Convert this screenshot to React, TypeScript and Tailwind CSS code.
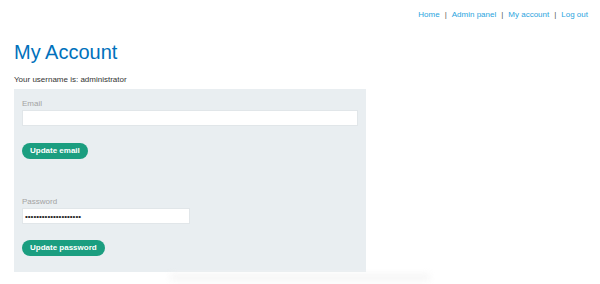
import React from "react";

const links = ["Home", "Admin panel", "My account", "Log out"];

export default function App() {
  return (
    <div className="min-h-screen bg-white font-['Liberation_Sans',Arial,sans-serif] text-[#333]">
      {/* Top nav */}
      <nav className="flex justify-end pt-[11px] pr-[12px] text-[8px] leading-[8px]">
        {links.map((l, i) => (
          <span key={l} className="flex">
            {i > 0 && <span className="mx-[5px] text-[#555]">|</span>}
            <a className="text-[#2aa4de]">{l}</a>
          </span>
        ))}
      </nav>

      <div className="pl-[14px]">
        <h1 className="mt-[23px] text-[20px] leading-[20px] text-[#0071bc]">My Account</h1>
        <p className="mt-[14px] text-[8px] leading-[8px] text-[#333]">Your username is: administrator</p>

        {/* Form panel */}
        <div className="mt-[5px] w-[352px] bg-[#e9eef1] px-[8px] pt-[11px] pb-[16px]">
          <label className="block text-[8px] leading-[8px] text-[#a3a3a3]">Email</label>
          <input
            type="text"
            className="mt-[2px] block h-[16px] w-[336px] border border-[#e1e6e9] bg-white outline-none"
          />
          <button className="mt-[17px] block h-[16px] rounded-full bg-[#1b9e80] px-[8px] text-[8px] font-bold leading-[8px] text-white">
            Update email
          </button>

          <label className="mt-[39px] block text-[8px] leading-[8px] text-[#a3a3a3]">Password</label>
          <input
            type="password"
            readOnly
            defaultValue="aaaaaaaaaaaaaaaaaaaa"
            className="mt-[2px] block h-[16px] w-[168px] border border-[#e1e6e9] bg-white pl-[2px] text-[8px] text-[#222] outline-none"
          />
          <button className="mt-[16px] block h-[16px] rounded-full bg-[#1b9e80] px-[8px] text-[8px] font-bold leading-[8px] text-white">
            Update password
          </button>
        </div>
      </div>

      {/* faint footer shadow */}
      <div className="ml-[170px] mt-[2px] h-[10px] w-[260px] bg-gradient-to-b from-[#f2f2f2] to-white blur-[3px]" />
    </div>
  );
}
